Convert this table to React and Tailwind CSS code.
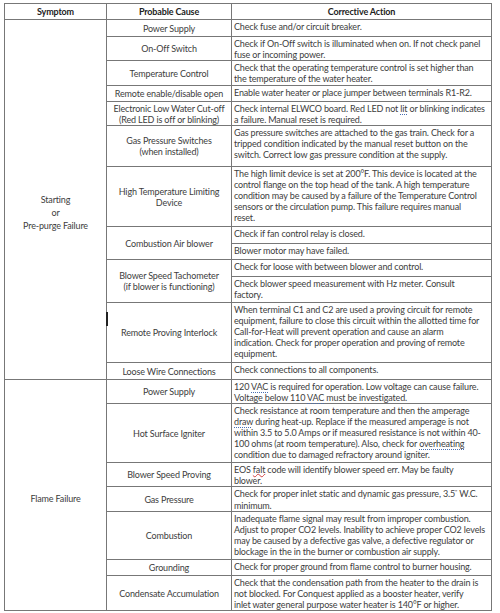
import React from "react";

const U = ({ children, red }) => (
  <span
    className={
      red
        ? "underline decoration-wavy decoration-[#d04040] underline-offset-0"
        : "underline decoration-dotted decoration-[#4a6fb0] underline-offset-2"
    }
  >
    {children}
  </span>
);

const startRows = [
  { cause: ["Power Supply"], h: [17], actions: [["Check fuse and/or circuit breaker."]] },
  {
    cause: ["On-Off Switch"],
    h: [24],
    actions: [["Check if On-Off switch is illuminated when on. If not check panel", "fuse or incoming power."]],
  },
  {
    cause: ["Temperature Control"],
    h: [25],
    actions: [["Check that the operating temperature control is set higher than", "the temperature of the water heater."]],
  },
  {
    cause: ["Remote enable/disable open"],
    h: [16],
    actions: [["Enable water heater or place jumper between terminals R1-R2."]],
  },
  {
    cause: ["Electronic Low Water Cut-off", "(Red LED is off or blinking)"],
    h: [24],
    actions: [
      [
        <>
          Check internal ELWCO board. Red LED not <U>lit</U> or blinking indicates
        </>,
        "a failure. Manual reset is required.",
      ],
    ],
  },
  {
    cause: ["Gas Pressure Switches", "(when installed)"],
    h: [41],
    actions: [
      [
        "Gas pressure switches are attached to the gas train. Check for a",
        "tripped condition indicated by the manual reset button on the",
        "switch. Correct low gas pressure condition at the supply.",
      ],
    ],
  },
  {
    cause: ["High Temperature Limiting", "Device"],
    h: [60],
    actions: [
      [
        "The high limit device is set at 200°F. This device is located at the",
        "control flange on the top head of the tank. A high temperature",
        "condition may be caused by a failure of the Temperature Control",
        "sensors or the circulation pump. This failure requires manual",
        "reset.",
      ],
    ],
  },
  {
    cause: ["Combustion Air blower"],
    h: [17, 16],
    actions: [["Check if fan control relay is closed."], ["Blower motor may have failed."]],
  },
  {
    cause: ["Blower Speed Tachometer", "(if blower is functioning)"],
    h: [17, 26],
    actions: [
      ["Check for loose with between blower and control."],
      ["Check blower speed measurement with Hz meter. Consult", "factory."],
    ],
  },
  {
    cause: ["Remote Proving Interlock"],
    h: [60],
    mark: true,
    actions: [
      [
        "When terminal C1 and C2 are used a proving circuit for remote",
        "equipment, failure to close this circuit within the allotted time for",
        "Call-for-Heat will prevent operation and cause an alarm",
        "indication. Check for proper operation and proving of remote",
        "equipment.",
      ],
    ],
  },
  { cause: ["Loose Wire Connections"], h: [17], actions: [["Check connections to all components."]] },
];

const flameRows = [
  {
    cause: ["Power Supply"],
    h: [24],
    actions: [
      [
        <>
          120 <U>VAC</U> is required for operation. Low voltage can cause failure.
        </>,
        <>
          Voltage below 110 <U>VAC</U> must be investigated.
        </>,
      ],
    ],
  },
  {
    cause: ["Hot Surface Igniter"],
    h: [59],
    actions: [
      [
        "Check resistance at room temperature and then the amperage",
        <>
          <U>draw</U> during heat-up. Replace if the measured amperage is not
        </>,
        "within 3.5 to 5.0 Amps or if measured resistance is not within 40-",
        <>
          100 ohms (at room temperature). Also, check for <U>overheating</U>
        </>,
        "condition due to damaged refractory around igniter.",
      ],
    ],
  },
  {
    cause: ["Blower Speed Proving"],
    h: [24],
    actions: [
      [
        <>
          EOS <U red>falt</U> code will identify blower speed err. May be faulty
        </>,
        "blower.",
      ],
    ],
  },
  {
    cause: ["Gas Pressure"],
    h: [24],
    actions: [
      [
        <>
          Check for proper inlet static and dynamic gas pressure, 3.5
          <span className="relative -top-[3px] text-[6px]">"</span> W.C.
        </>,
        "minimum.",
      ],
    ],
  },
  {
    cause: ["Combustion"],
    h: [48],
    actions: [
      [
        "Inadequate flame signal may result from improper combustion.",
        "Adjust to proper CO2 levels. Inability to achieve proper CO2 levels",
        "may be caused by a defective gas valve, a defective regulator or",
        "blockage in the in the burner or combustion air supply.",
      ],
    ],
  },
  {
    cause: ["Grounding"],
    h: [16],
    actions: [["Check for proper ground from flame control to burner housing."]],
  },
  {
    cause: ["Condensate Accumulation"],
    h: [35],
    actions: [
      [
        "Check that the condensation path from the heater to the drain is",
        "not blocked. For Conquest applied as a booster heater, verify",
        "inlet water general purpose water heater is 140°F or higher.",
      ],
    ],
  },
];

const td = "border border-[#777] p-0";

const Lines = ({ lines }) =>
  lines.map((l, i) => (
    <div key={i} className="whitespace-nowrap">
      {l}
    </div>
  ));

function Group({ symptom, rows }) {
  const total = rows.reduce((n, r) => n + r.actions.length, 0);
  const out = [];
  rows.forEach((r, gi) => {
    r.actions.forEach((a, ai) => {
      out.push(
        <tr key={`${gi}-${ai}`} style={{ height: r.h[ai] }}>
          {gi === 0 && ai === 0 && (
            <td rowSpan={total} className={`${td} align-middle text-center`}>
              {symptom}
            </td>
          )}
          {ai === 0 && (
            <td rowSpan={r.actions.length} className={`${td} relative align-middle text-center`}>
              {r.mark && <span className="absolute -left-[1px] top-[9px] h-[14px] w-[2px] bg-[#222]" />}
              <Lines lines={r.cause} />
            </td>
          )}
          <td className={`${td} align-top pl-[2px] pr-[2px] pt-[1px]`}>
            <Lines lines={a} />
          </td>
        </tr>
      );
    });
  });
  return out;
}

export default function App() {
  return (
    <div className="w-[500px] h-[613px] overflow-hidden bg-white pt-[3px] pl-[4px]">
      <table
        className="table-fixed border-collapse text-[#3d3d3d] leading-[11px] text-[9px] tracking-[-0.15px]"
        style={{ width: 487, fontFamily: "Lato, 'Open Sans', sans-serif" }}
      >
        <colgroup>
          <col style={{ width: 102 }} />
          <col style={{ width: 125 }} />
          <col style={{ width: 260 }} />
        </colgroup>
        <tbody>
          <tr style={{ height: 16 }}>
            <th className={`${td} align-middle font-bold text-[#222]`}>Symptom</th>
            <th className={`${td} align-middle font-bold text-[#222]`}>Probable Cause</th>
            <th className={`${td} align-middle font-bold text-[#222]`}>Corrective Action</th>
          </tr>
          <Group
            symptom={
              <span className="leading-[13px] inline-block pt-[26px]">
                Starting
                <br />
                or
                <br />
                Pre-purge Failure
              </span>
            }
            rows={startRows}
          />
          <Group symptom={<span className="inline-block pt-[6px]">Flame Failure</span>} rows={flameRows} />
        </tbody>
      </table>
    </div>
  );
}
